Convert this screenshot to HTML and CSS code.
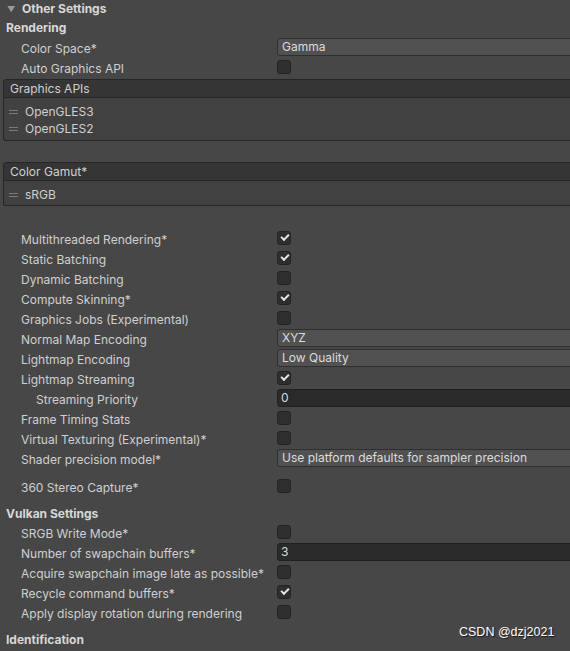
FILE: index.html
```html
<!DOCTYPE html>
<html lang="en">
<head>
    <meta charset="UTF-8">
    <meta name="viewport" content="width=device-width, initial-scale=1.0">
    <title>Player Settings - Other Settings</title>
    <link rel="stylesheet" href="styles.css">
</head>
<body>
    <div class="inspector">
        <div class="foldout"><span class="arrow">&#9660;</span>Other Settings</div>

        <div class="section-title">Rendering</div>
        <div class="row">
            <span class="label">Color Space*</span>
            <div class="field"><div class="dropdown">Gamma</div></div>
        </div>
        <div class="row">
            <span class="label">Auto Graphics API</span>
            <div class="field"><span class="toggle"></span></div>
        </div>

        <div class="list list-apis">
            <div class="list-header">Graphics APIs</div>
            <div class="list-body">
                <div class="list-item"><span class="handle"></span>OpenGLES3</div>
                <div class="list-item"><span class="handle"></span>OpenGLES2</div>
            </div>
        </div>

        <div class="list list-gamut">
            <div class="list-header">Color Gamut*</div>
            <div class="list-body">
                <div class="list-item"><span class="handle"></span>sRGB</div>
            </div>
        </div>

        <div class="group group-render">
            <div class="row">
                <span class="label">Multithreaded Rendering*</span>
                <div class="field"><span class="toggle on"></span></div>
            </div>
            <div class="row">
                <span class="label">Static Batching</span>
                <div class="field"><span class="toggle on"></span></div>
            </div>
            <div class="row">
                <span class="label">Dynamic Batching</span>
                <div class="field"><span class="toggle"></span></div>
            </div>
            <div class="row">
                <span class="label">Compute Skinning*</span>
                <div class="field"><span class="toggle on"></span></div>
            </div>
            <div class="row">
                <span class="label">Graphics Jobs (Experimental)</span>
                <div class="field"><span class="toggle"></span></div>
            </div>
            <div class="row">
                <span class="label">Normal Map Encoding</span>
                <div class="field"><div class="dropdown">XYZ</div></div>
            </div>
            <div class="row">
                <span class="label">Lightmap Encoding</span>
                <div class="field"><div class="dropdown">Low Quality</div></div>
            </div>
            <div class="row">
                <span class="label">Lightmap Streaming</span>
                <div class="field"><span class="toggle on"></span></div>
            </div>
            <div class="row">
                <span class="label indent">Streaming Priority</span>
                <div class="field"><div class="number">0</div></div>
            </div>
            <div class="row">
                <span class="label">Frame Timing Stats</span>
                <div class="field"><span class="toggle"></span></div>
            </div>
            <div class="row">
                <span class="label">Virtual Texturing (Experimental)*</span>
                <div class="field"><span class="toggle"></span></div>
            </div>
            <div class="row">
                <span class="label">Shader precision model*</span>
                <div class="field"><div class="dropdown">Use platform defaults for sampler precision</div></div>
            </div>
        </div>

        <div class="row row-spaced">
            <span class="label">360 Stereo Capture*</span>
            <div class="field"><span class="toggle"></span></div>
        </div>

        <div class="section-title spaced-lg short">Vulkan Settings</div>
        <div class="row">
            <span class="label">SRGB Write Mode*</span>
            <div class="field"><span class="toggle"></span></div>
        </div>
        <div class="row">
            <span class="label">Number of swapchain buffers*</span>
            <div class="field"><div class="number">3</div></div>
        </div>
        <div class="row">
            <span class="label">Acquire swapchain image late as possible*</span>
            <div class="field"><span class="toggle"></span></div>
        </div>
        <div class="row">
            <span class="label">Recycle command buffers*</span>
            <div class="field"><span class="toggle on"></span></div>
        </div>
        <div class="row">
            <span class="label">Apply display rotation during rendering</span>
            <div class="field"><span class="toggle"></span></div>
        </div>

        <div class="section-title spaced">Identification</div>
        <div class="row row-cut">
            <span class="label"></span>
            <div class="field"><span class="toggle"></span></div>
        </div>
    </div>

    <div class="watermark">CSDN @dzj2021</div>
</body>
</html>
```

FILE: styles.css
```css
body {
    margin: 0;
    background: #474747;
    overflow: hidden;
    font-family: 'Inter', 'Noto Sans', sans-serif;
    font-size: 12px;
    color: #d0d0d0;
}

.inspector {
    width: 620px;
}

.foldout {
    height: 17px;
    display: flex;
    align-items: center;
    padding-left: 7px;
    font-weight: bold;
    color: #d8d8d8;
}

.foldout .arrow {
    font-size: 8px;
    color: #9a9a9a;
    width: 15px;
}

.section-title {
    height: 21px;
    display: flex;
    align-items: center;
    padding-left: 6px;
    font-weight: bold;
    color: #d8d8d8;
}

.section-title.spaced {
    margin-top: 6px;
}

.section-title.spaced-lg {
    margin-top: 7px;
}

.section-title.short {
    height: 19px;
}

.row {
    height: 20px;
    display: flex;
    align-items: center;
}

.row-spaced {
    margin-top: 8px;
}

.row-cut {
    margin-top: -1px;
}

.label {
    width: 256px;
    padding-left: 21px;
    white-space: nowrap;
}

.label.indent {
    width: 241px;
    padding-left: 36px;
}

.field {
    flex: 1;
    display: flex;
    align-items: center;
}

.dropdown {
    flex: 1;
    height: 16px;
    line-height: 16px;
    margin-top: -2px;
    padding-left: 4px;
    background: #515151;
    border: 1px solid #2f2f2f;
    border-radius: 3px;
    color: #dcdcdc;
    white-space: nowrap;
}

.number {
    flex: 1;
    height: 16px;
    line-height: 16px;
    margin-top: -2px;
    padding-left: 3px;
    background: #2a2a2a;
    border: 1px solid #202020;
    border-radius: 3px;
    color: #dcdcdc;
}

.toggle {
    width: 12px;
    height: 12px;
    margin-top: -2px;
    background: #2f2f2f;
    border: 1px solid #232323;
    border-radius: 3px;
    position: relative;
}

.toggle.on::after {
    content: '';
    position: absolute;
    left: 3px;
    top: 2px;
    width: 6px;
    height: 3px;
    border-left: 2px solid #e8e8e8;
    border-bottom: 2px solid #e8e8e8;
    transform: rotate(-45deg);
}

.list {
    margin-left: 3px;
}

.list-apis {
    margin-top: 1px;
}

.list-gamut {
    margin-top: 21px;
}

.list-header {
    height: 17px;
    line-height: 17px;
    padding-left: 6px;
    background: #353535;
    border: 1px solid #262626;
    border-radius: 3px 0 0 0;
}

.list-body {
    padding: 5px 0 3px;
    background: #414141;
    border: 1px solid #262626;
    border-top: none;
    border-radius: 0 0 0 3px;
}

.list-gamut .list-body {
    padding: 5px 0 2px;
}

.list-item {
    height: 17px;
    display: flex;
    align-items: center;
    padding-left: 5px;
}

.handle {
    width: 9px;
    height: 2px;
    margin-right: 7px;
    border-top: 1px solid #7a7a7a;
    border-bottom: 1px solid #7a7a7a;
}

.group-render {
    margin-top: 23px;
}

.watermark {
    position: absolute;
    left: 459px;
    top: 625px;
    font-family: 'Liberation Sans', Arial, sans-serif;
    font-size: 12.5px;
    color: #ffffff;
    text-shadow: 1px 1px 1px #1a1a1a;
}
```
